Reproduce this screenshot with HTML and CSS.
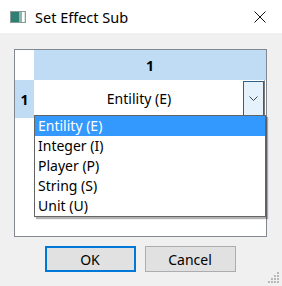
FILE: index.html
```html
<!DOCTYPE html>
<html lang="en">

<head>
  <meta charset="UTF-8" />
  <title>Set Effect Sub</title>
  <link rel="stylesheet" href="styles.css">
</head>

<body>
  <div class="titlebar">
    <svg class="app-icon" width="16" height="12" viewBox="0 0 16 12">
      <rect x="0.5" y="0.5" width="15" height="11" fill="#d8e4e2" stroke="#8a9a98" />
      <rect x="1" y="1" width="8" height="10" fill="#2f7f72" />
      <rect x="9" y="1" width="3" height="10" fill="#8fb5ae" />
      <rect x="12" y="1" width="2" height="10" fill="#ffffff" />
    </svg>
    <span class="title">Set Effect Sub</span>
    <svg class="close" width="12" height="12" viewBox="0 0 12 12">
      <path d="M0.5 0.5 L11.5 11.5 M11.5 0.5 L0.5 11.5" stroke="#111" stroke-width="1" fill="none" />
    </svg>
  </div>

  <div class="content">
    <div class="grid">
      <div class="grid-row head">
        <div class="corner"></div>
        <div class="col-head">1</div>
      </div>
      <div class="grid-row">
        <div class="row-head">1</div>
        <div class="combo">
          <span class="combo-text">Entility (E)</span>
          <span class="combo-btn">
            <svg width="9" height="5" viewBox="0 0 9 5">
              <path d="M0.5 0.5 L4.5 4.5 L8.5 0.5" stroke="#444" fill="none" />
            </svg>
          </span>
        </div>
      </div>
      <ul class="dropdown">
        <li class="selected">Entility (E)</li>
        <li>Integer (I)</li>
        <li>Player (P)</li>
        <li>String (S)</li>
        <li>Unit (U)</li>
      </ul>
    </div>

    <div class="buttons">
      <button class="btn default">OK</button>
      <button class="btn">Cancel</button>
    </div>
  </div>

  <svg class="grip" width="12" height="12" viewBox="0 0 12 12">
    <rect x="9" y="0" width="2" height="2" fill="#b8b8b8" />
    <rect x="6" y="3" width="2" height="2" fill="#b8b8b8" />
    <rect x="9" y="3" width="2" height="2" fill="#b8b8b8" />
    <rect x="3" y="6" width="2" height="2" fill="#b8b8b8" />
    <rect x="6" y="6" width="2" height="2" fill="#b8b8b8" />
    <rect x="9" y="6" width="2" height="2" fill="#b8b8b8" />
    <rect x="0" y="9" width="2" height="2" fill="#b8b8b8" />
    <rect x="3" y="9" width="2" height="2" fill="#b8b8b8" />
    <rect x="6" y="9" width="2" height="2" fill="#b8b8b8" />
    <rect x="9" y="9" width="2" height="2" fill="#b8b8b8" />
  </svg>
</body>

</html>
```

FILE: styles.css
```css
body {
  margin: 0;
  width: 282px;
  height: 286px;
  background: #f0f0f0;
  font-family: 'Noto Sans', 'Open Sans', sans-serif;
  font-size: 14px;
  color: #000;
  position: relative;
  overflow: hidden;
}

.titlebar {
  height: 33px;
  background: #fff;
  display: flex;
  align-items: center;
  padding-left: 10px;
}

.app-icon {
  margin-right: 9px;
}

.title {
  font-size: 14.5px;
  flex: 1;
}

.close {
  margin-right: 16px;
}

.content {
  padding: 16px 15px 0 14px;
}

.grid {
  position: relative;
  height: 186px;
  background: #fff;
  border: 1px solid #828790;
}

.grid-row {
  display: flex;
}

.grid-row.head {
  height: 30px;
}

.corner {
  width: 19px;
  background: #fff;
}

.col-head {
  flex: 1;
  background: #bfdcf4;
  font-weight: bold;
  display: flex;
  align-items: center;
  justify-content: center;
}

.row-head {
  width: 19px;
  height: 38px;
  background: #bfdcf4;
  font-weight: bold;
  display: flex;
  align-items: center;
  justify-content: center;
}

.combo {
  width: 229px;
  height: 35px;
  border: 1px solid #7a7a7a;
  border-top-color: #fff;
  border-left-color: #fff;
  background: #fff;
  display: flex;
  align-items: stretch;
}

.combo-text {
  flex: 1;
  display: flex;
  align-items: center;
  justify-content: center;
  font-size: 14px;
}

.combo-btn {
  width: 19px;
  background: #e5f1fb;
  border: 1px solid #2c628b;
  display: flex;
  align-items: center;
  justify-content: center;
}

.dropdown {
  position: absolute;
  left: 19px;
  top: 65px;
  width: 230px;
  margin: 0;
  padding: 0;
  list-style: none;
  background: #fff;
  border: 1px solid #646464;
  box-shadow: 2px 2px 1px rgba(0, 0, 0, 0.3);
  font-size: 14px;
}

.dropdown li {
  height: 20px;
  line-height: 20px;
  padding-left: 3px;
}

.dropdown li.selected {
  background: #3399ff;
  color: #fff;
}

.buttons {
  display: flex;
  justify-content: center;
  gap: 9px;
  margin-top: 9px;
  padding-right: 1px;
}

.btn {
  width: 91px;
  height: 26px;
  background: #e1e1e1;
  border: 1px solid #adadad;
  font-family: 'Noto Sans', 'Open Sans', sans-serif;
  font-size: 14px;
  padding: 0;
  color: #000;
}

.btn.default {
  border: 2px solid #0078d7;
}

.grip {
  position: absolute;
  right: 2px;
  bottom: 2px;
}
```
